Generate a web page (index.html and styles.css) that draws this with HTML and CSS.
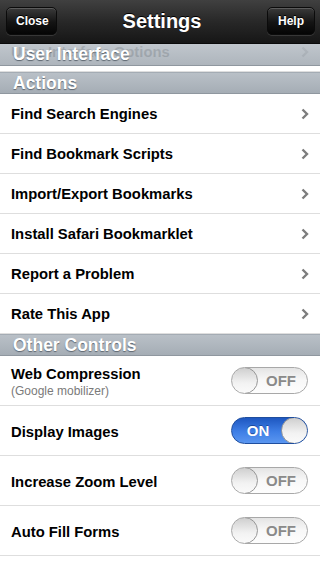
FILE: index.html
```html
<!DOCTYPE html>
<html>
<head>
<meta charset="utf-8">
<link rel="stylesheet" href="styles.css">
</head>
<body>
<div class="nav">
  <button class="navbtn">Close</button>
  <div class="title">Settings</div>
  <button class="navbtn">Help</button>
</div>
<div class="peek">
  <div class="row ghost">
    <span class="label">User Interface Options</span>
    <svg class="chev" width="8" height="12" viewBox="0 0 8 12"><path d="M1.5 1.5 L6 6 L1.5 10.5" fill="none" stroke="#7d7d7d" stroke-width="2.4"/></svg>
  </div>
  <div class="header stuck">User Interface</div>
</div>
<div class="header">Actions</div>
<div class="row"><span class="label">Find Search Engines</span><svg class="chev" width="8" height="12" viewBox="0 0 8 12"><path d="M1.5 1.5 L6 6 L1.5 10.5" fill="none" stroke="#7d7d7d" stroke-width="2.4"/></svg></div>
<div class="row"><span class="label">Find Bookmark Scripts</span><svg class="chev" width="8" height="12" viewBox="0 0 8 12"><path d="M1.5 1.5 L6 6 L1.5 10.5" fill="none" stroke="#7d7d7d" stroke-width="2.4"/></svg></div>
<div class="row"><span class="label">Import/Export Bookmarks</span><svg class="chev" width="8" height="12" viewBox="0 0 8 12"><path d="M1.5 1.5 L6 6 L1.5 10.5" fill="none" stroke="#7d7d7d" stroke-width="2.4"/></svg></div>
<div class="row"><span class="label">Install Safari Bookmarklet</span><svg class="chev" width="8" height="12" viewBox="0 0 8 12"><path d="M1.5 1.5 L6 6 L1.5 10.5" fill="none" stroke="#7d7d7d" stroke-width="2.4"/></svg></div>
<div class="row"><span class="label">Report a Problem</span><svg class="chev" width="8" height="12" viewBox="0 0 8 12"><path d="M1.5 1.5 L6 6 L1.5 10.5" fill="none" stroke="#7d7d7d" stroke-width="2.4"/></svg></div>
<div class="row"><span class="label">Rate This App</span><svg class="chev" width="8" height="12" viewBox="0 0 8 12"><path d="M1.5 1.5 L6 6 L1.5 10.5" fill="none" stroke="#7d7d7d" stroke-width="2.4"/></svg></div>
<div class="header">Other Controls</div>
<div class="row tall">
  <div class="texts"><span class="label">Web Compression</span><span class="sub">(Google mobilizer)</span></div>
  <div class="switch off"><span class="knob"></span><span class="stxt">OFF</span></div>
</div>
<div class="row tall">
  <div class="texts"><span class="label">Display Images</span></div>
  <div class="switch on"><span class="stxt">ON</span><span class="knob"></span></div>
</div>
<div class="row tall">
  <div class="texts"><span class="label">Increase Zoom Level</span></div>
  <div class="switch off"><span class="knob"></span><span class="stxt">OFF</span></div>
</div>
<div class="row tall">
  <div class="texts"><span class="label">Auto Fill Forms</span></div>
  <div class="switch off"><span class="knob"></span><span class="stxt">OFF</span></div>
</div>
</body>
</html>
```
FILE: styles.css
```css
html, body {
  margin: 0;
  padding: 0;
  background: #fff;
  font-family: "Liberation Sans", Arial, sans-serif;
  width: 320px;
  height: 568px;
  overflow: hidden;
}
.nav {
  height: 44px;
  box-sizing: border-box;
  display: flex;
  align-items: center;
  justify-content: space-between;
  padding: 0 5px 1px 6px;
  background: linear-gradient(#404040, #282828 50%, #161616);
  border-bottom: 1px solid #0a0a0a;
}
.navbtn {
  height: 28px;
  padding: 0 9px;
  border-radius: 5px;
  border: 1px solid #0b0b0b;
  background: linear-gradient(#3a3a3a, #141414 55%, #050505);
  box-shadow: inset 0 1px 0 rgba(255,255,255,0.18), 0 1px 0 rgba(255,255,255,0.12);
  color: #fff;
  font-family: "Liberation Sans", Arial, sans-serif;
  font-weight: bold;
  font-size: 12px;
  text-shadow: 0 -1px 0 #000;
}
.navbtn:first-child { width: 51px; }
.navbtn:last-child { width: 48px; }
.title {
  color: #fff;
  font-weight: bold;
  font-size: 20px;
  text-shadow: 0 -1px 0 #000;
  margin-left: 0;
}
.header {
  height: 22px;
  box-sizing: border-box;
  padding-left: 13px;
  display: flex;
  align-items: center;
  background: linear-gradient(#b9c0c7, #a5adb5);
  border-top: 1px solid #a4acb4;
  border-bottom: 1px solid #8f979f;
  color: #fff;
  font-weight: bold;
  font-size: 17.5px;
  text-shadow: 0 1px 1px #5d6670;
}
.peek {
  position: relative;
  height: 28px;
  overflow: hidden;
}
.peek .ghost {
  margin-top: -12px;
}
.header.stuck {
  position: absolute;
  top: 0;
  left: 0;
  right: 0;
  border-top: none;
  background: linear-gradient(rgba(185,192,199,0.9), rgba(165,173,181,0.9));
}
.row {
  height: 40px;
  box-sizing: border-box;
  border-bottom: 1px solid #dedede;
  display: flex;
  align-items: center;
  justify-content: space-between;
  padding: 0 11px 0 11px;
}
.label {
  font-weight: bold;
  font-size: 14.8px;
  color: #000;
}
.row.tall {
  height: 50px;
  padding-right: 12px;
}
.texts {
  display: flex;
  flex-direction: column;
  padding-top: 2px;
}
.sub {
  font-size: 12px;
  color: #7a7a7a;
  margin-top: 2px;
}
.switch {
  width: 77px;
  height: 27px;
  box-sizing: border-box;
  border-radius: 14px;
  display: flex;
  align-items: center;
  overflow: hidden;
}
.switch.off {
  border: 1px solid #a8a8a8;
  background: linear-gradient(#e4e4e4, #f8f8f8 50%, #fdfdfd);
}
.switch.on {
  border: 1px solid #1f4e9e;
  background: linear-gradient(#1e57c0, #3f7fe6 55%, #5a96f0);
}
.knob {
  width: 27px;
  height: 27px;
  box-sizing: border-box;
  border-radius: 50%;
  border: 1px solid #979797;
  background: linear-gradient(#cfcfcf, #f2f2f2 60%, #fafafa);
  flex: none;
  margin: -1px;
}
.stxt {
  flex: 1;
  text-align: center;
  font-weight: bold;
  font-size: 15px;
}
.off .stxt { color: #8a8a8a; padding-right: 2px; }
.on .stxt { color: #fff; text-shadow: 0 -1px 0 #1b4aa0; padding-left: 2px; }
```
